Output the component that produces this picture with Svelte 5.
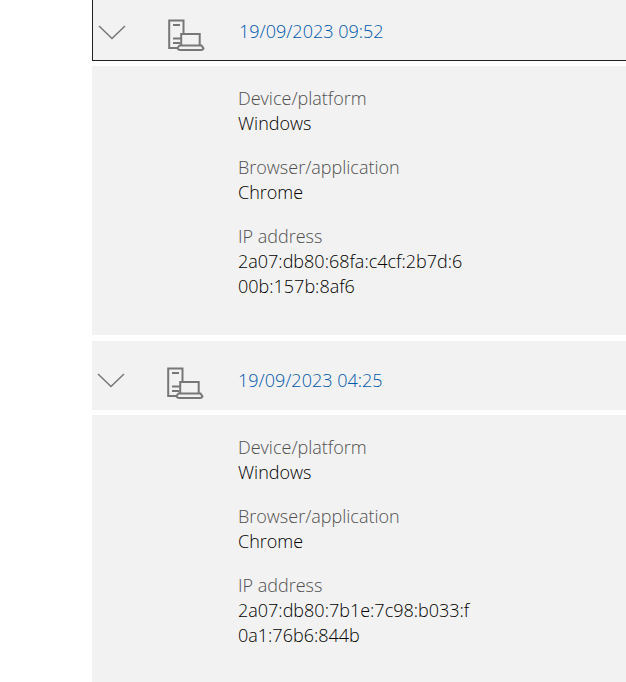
<script>
	let activities = $state([
		{
			time: '19/09/2023 09:52',
			platform: 'Windows',
			browser: 'Chrome',
			ip: '2a07:db80:68fa:c4cf:2b7d:600b:157b:8af6',
			open: true
		},
		{
			time: '19/09/2023 04:25',
			platform: 'Windows',
			browser: 'Chrome',
			ip: '2a07:db80:7b1e:7c98:b033:f0a1:76b6:844b',
			open: true
		}
	]);
	let selected = $state(0);

	function toggle(i) {
		selected = i;
		activities[i].open = !activities[i].open;
	}
</script>

<main class="activities">
	{#each activities as activity, i}
		<section class="activity">
			<button
				class="header"
				class:selected={selected === i}
				aria-expanded={activity.open}
				aria-controls="details-{i}"
				onclick={() => toggle(i)}
			>
				<svg class="chevron" class:closed={!activity.open} viewBox="0 0 28 16" aria-hidden="true">
					<path d="M1 2l13 12.5L27 2" />
				</svg>
				<svg class="device" viewBox="0 0 37 40" aria-hidden="true">
					<path d="M15.500 21V8.500H1.200V36H10" />
					<path d="M5 13h7M5 26.500h8M5 31h7" />
					<path d="M13.200 33V22H31.700V33" />
					<path class="base" d="M11.500 33.500H33.500L35.500 36.500Q35 38 33 38H12.500Q10 38 9.500 36Z" />
				</svg>
				<span class="time">{activity.time}</span>
			</button>

			{#if activity.open}
				<div class="panel" id="details-{i}">
					<dl class="details">
						<div>
							<dt>Device/platform</dt>
							<dd>{activity.platform}</dd>
						</div>
						<div>
							<dt>Browser/application</dt>
							<dd>{activity.browser}</dd>
						</div>
						<div>
							<dt>IP address</dt>
							<dd>{activity.ip}</dd>
						</div>
					</dl>
				</div>
			{/if}
		</section>
	{/each}
</main>

<style>
	:global(body) {
		background: #fff;
	}
	.activities {
		display: flex;
		flex-direction: column;
		gap: 6px;
		margin: -9px 0 0 92px;
		font-family: 'Segoe UI', 'Open Sans', 'Noto Sans', sans-serif;
		font-size: 18px;
		font-weight: 300;
		line-height: 25px;
	}
	.activity {
		display: flex;
		flex-direction: column;
		gap: 5px;
	}
	.header {
		display: grid;
		grid-template-columns: 70px 71px 1fr;
		align-items: center;
		box-sizing: border-box;
		width: 100%;
		min-height: 69px;
		padding: 9px 0 0 5px;
		border: 0;
		background: #f2f2f2;
		color: #0058ad;
		font: inherit;
		text-align: left;
		cursor: pointer;
	}
	.header.selected {
		min-height: 70px;
		padding-top: 11px;
		border: 1px solid #222;
		border-right: 0;
		outline: none;
	}
	.chevron {
		width: 28px;
		height: 16px;
		fill: none;
		stroke: #777;
		stroke-width: 1.5;
	}
	.chevron.closed {
		transform: rotate(-90deg);
	}
	.device {
		width: 37px;
		height: 40px;
		fill: none;
		stroke: #777;
		stroke-width: 2;
	}
	.device .base {
		fill: #f2f2f2;
	}
	.panel {
		padding: 20px 20px 36px 146px;
		background: #f2f2f2;
	}
	.details {
		display: flex;
		flex-direction: column;
		gap: 19px;
		max-width: 232px;
		margin: 0;
	}
	dt {
		color: #505050;
	}
	dd {
		margin: 0;
		color: #000;
		word-break: break-all;
	}
</style>
